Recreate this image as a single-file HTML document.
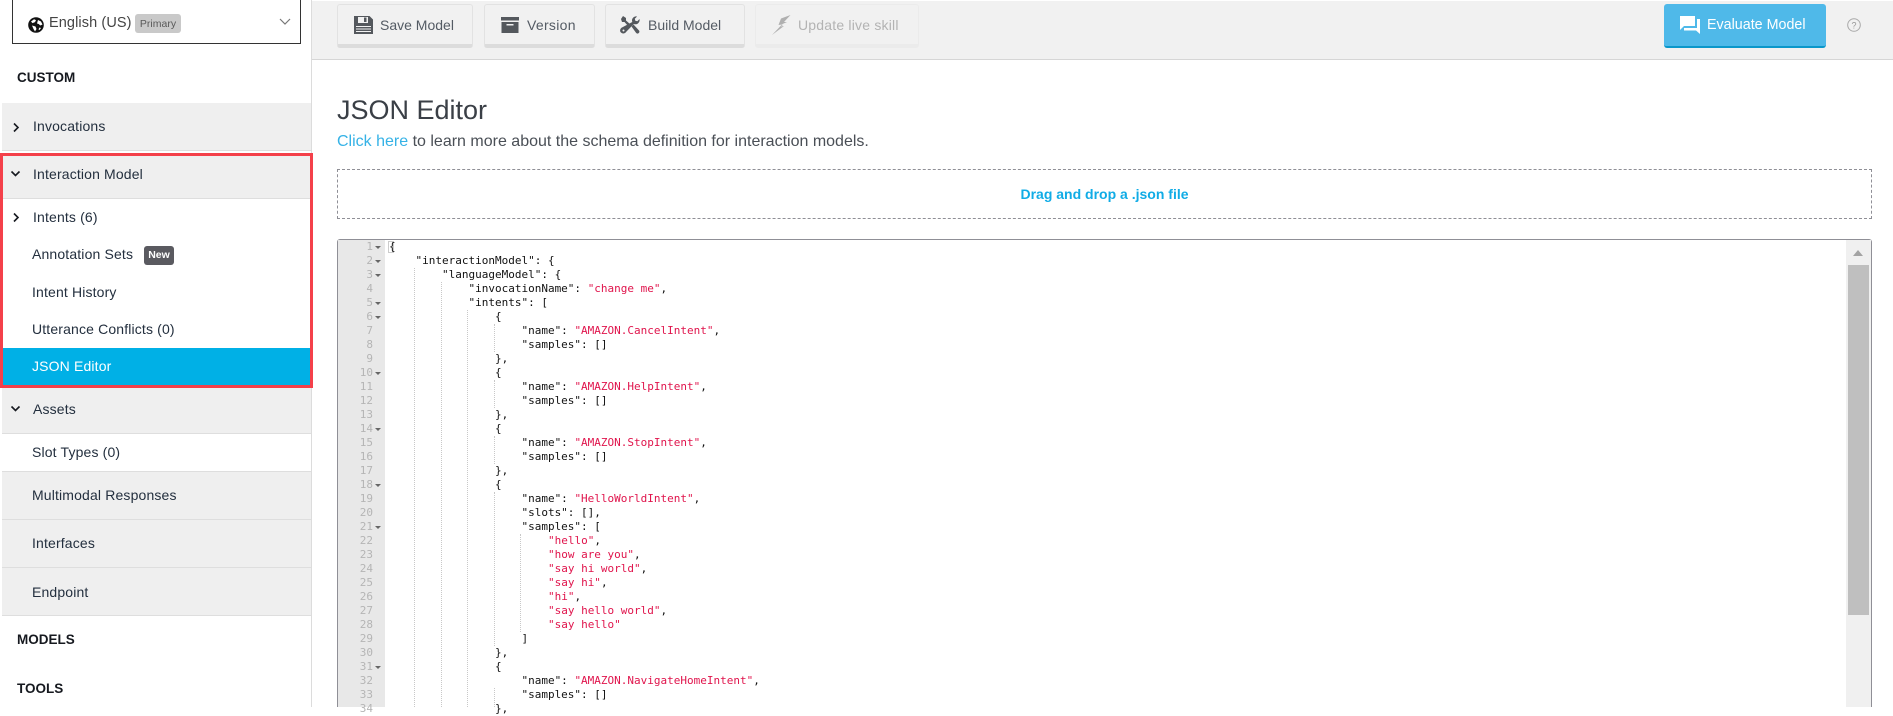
<!DOCTYPE html>
<html><head><meta charset="utf-8"><title>JSON Editor</title>
<style>
html,body{margin:0;padding:0;background:#fff;width:1893px;height:707px;overflow:hidden;font-family:"Liberation Sans",sans-serif;color:#232f3e}
.a{position:absolute}
.t{position:absolute;white-space:nowrap;font-size:14px;letter-spacing:.15px;line-height:18px;color:#232f3e}
.row{position:absolute;left:2px;width:309px;background:#efefef;border-bottom:1px solid #dedede;box-sizing:border-box}
.h{position:absolute;left:17px;font-weight:bold;font-size:13.5px;line-height:16px;white-space:nowrap;color:#16191f}
.btn{position:absolute;top:4px;height:44px;box-sizing:border-box;background:#f1f1f1;border:1px solid #e2e2e2;border-bottom:4px solid #dcdcdc;border-radius:3px}
.bt{position:absolute;top:16px;white-space:nowrap;font-size:14px;line-height:18px;color:#545b64}
#code{position:absolute;left:389px;top:240px;font:11px/14px "DejaVu Sans Mono",monospace;color:#111;white-space:pre;margin:0}
#nums{position:absolute;left:338px;top:240px;width:35px;text-align:right;font:11px/14px "DejaVu Sans Mono",monospace;color:#b5b5b5;white-space:pre;margin:0}
.s{color:#e0144c}
.g{position:absolute;width:0;border-left:1px dotted #c8c8c8}
.f{position:absolute;left:375px;width:0;height:0;border-left:3px solid transparent;border-right:3px solid transparent;border-top:3px solid #666}
</style></head><body>

<!-- sidebar -->
<div class="a" style="left:311px;top:0;width:1px;height:707px;background:#dcdcdc"></div>
<div class="a" style="left:12px;top:-2px;width:289px;height:46px;box-sizing:border-box;border:1px solid #333;background:#fff"></div>
<svg class="a" style="left:28px;top:17px" width="16" height="16" viewBox="0 0 16 16"><circle cx="8" cy="8" r="7.8" fill="#111"/><path d="M3 4.5l3-2.2 2 .8-1 2-2.5 1zM10 3l3 1.500 1.500 3-2.200 1-1.600-1.500-1.700-.5zM4 8.500l3.500 1 1 2.500-1.500 2.500-1.500-2.500zM11.500 10.500l1.500.5-1.500 2-1-.5z" fill="#fff"/></svg>
<div class="t" style="left:49px;top:14px;font-size:14.5px;color:#444;letter-spacing:.1px">English (US)</div>
<div class="a" style="left:135px;top:14px;width:46px;height:19px;background:#c9c9c9;border-radius:3px;font-size:10.5px;line-height:20px;text-align:center;color:#5a5a5a">Primary</div>
<svg class="a" style="left:279px;top:18px" width="12" height="8" viewBox="0 0 12 8"><path d="M1 1l5 5 5-5" fill="none" stroke="#777" stroke-width="1.2"/></svg>

<div class="h" style="top:70px">CUSTOM</div>

<div class="row" style="top:103px;height:48px"></div>
<svg class="a" style="left:12px;top:122px" width="8" height="11" viewBox="0 0 8 11"><path d="M2 1.500l4 4-4 4" fill="none" stroke="#16191f" stroke-width="1.600"/></svg>
<div class="t" style="left:33px;top:117px">Invocations</div>

<div class="row" style="top:155px;height:44px;left:3px;width:308px"></div>
<svg class="a" style="left:10px;top:170px" width="11" height="8" viewBox="0 0 11 8"><path d="M1.500 1.500l4 4 4-4" fill="none" stroke="#16191f" stroke-width="1.600"/></svg>
<div class="t" style="left:33px;top:165px">Interaction Model</div>

<svg class="a" style="left:12px;top:212px" width="8" height="11" viewBox="0 0 8 11"><path d="M2 1.500l4 4-4 4" fill="none" stroke="#16191f" stroke-width="1.600"/></svg>
<div class="t" style="left:33px;top:208px">Intents (6)</div>
<div class="t" style="left:32px;top:245px">Annotation Sets</div>
<div class="a" style="left:144px;top:246px;width:30px;height:19px;background:#5a5a60;border-radius:3px;color:#fff;font-size:10.5px;font-weight:bold;line-height:19px;text-align:center">New</div>
<div class="t" style="left:32px;top:283px">Intent History</div>
<div class="t" style="left:32px;top:320px">Utterance Conflicts (0)</div>
<div class="a" style="left:3px;top:348px;width:307px;height:37px;background:#00b0e6"></div>
<div class="t" style="left:32px;top:357px;color:#fff">JSON Editor</div>
<div class="a" style="left:0;top:153px;width:313px;height:235px;box-sizing:border-box;border:3px solid #f4404a"></div>

<div class="row" style="top:388px;height:46px"></div>
<svg class="a" style="left:10px;top:405px" width="11" height="8" viewBox="0 0 11 8"><path d="M1.500 1.500l4 4 4-4" fill="none" stroke="#16191f" stroke-width="1.600"/></svg>
<div class="t" style="left:33px;top:400px">Assets</div>
<div class="t" style="left:32px;top:443px">Slot Types (0)</div>

<div class="row" style="top:471px;height:49px;border-top:1px solid #dedede"></div>
<div class="t" style="left:32px;top:486px">Multimodal Responses</div>
<div class="row" style="top:520px;height:48px"></div>
<div class="t" style="left:32px;top:534px">Interfaces</div>
<div class="row" style="top:568px;height:48px"></div>
<div class="t" style="left:32px;top:583px">Endpoint</div>
<div class="h" style="top:632px">MODELS</div>
<div class="h" style="top:681px">TOOLS</div>

<!-- top bar -->
<div class="a" style="left:312px;top:1px;width:1581px;height:59px;box-sizing:border-box;background:#f1f1f1;border-bottom:1px solid #d6d6d6"></div>

<div class="btn" style="left:337px;width:136px"></div>
<svg class="a" style="left:354px;top:16px" width="19" height="18" viewBox="0 0 19 18"><path d="M0 0h15.500L19 3.500V18H0z" fill="#54585d"/><rect x="4" y="1" width="10" height="6" fill="#f1f1f1"/><rect x="10" y="1.500" width="2.500" height="4.500" fill="#54585d"/><path d="M2 10.500h15M2 13h15M2 15.500h15" stroke="#f1f1f1" stroke-width="1"/></svg>
<div class="bt" style="left:380px">Save Model</div>

<div class="btn" style="left:484px;width:111px"></div>
<svg class="a" style="left:501px;top:17px" width="18" height="16" viewBox="0 0 18 16"><rect width="18" height="3.500" fill="#54585d"/><rect x=".5" y="5" width="17" height="11" fill="#54585d"/><rect x="5.500" y="7" width="7" height="1.500" fill="#f1f1f1"/></svg>
<div class="bt" style="left:527px;letter-spacing:.3px">Version</div>

<div class="btn" style="left:605px;width:140px"></div>
<svg class="a" style="left:620px;top:16px" width="20" height="18" viewBox="0 0 20 18"><path d="M1 3l2-3 3 2v2.500l4.500 4-2 2-4-4.500H2z" fill="#54585d"/><path d="M11.500 10.500l2-2 5.500 6c.8 1 .3 2-.4 2.600-.8.7-1.800.6-2.500-.2z" fill="#54585d"/><path d="M12 4.500C12 2 14.500 0 17 .5l-2.200 2.300.5 2 2 .5L19.500 3c.6 2.800-1.500 5.300-4 5.300-.7 0-1.200-.1-1.700-.3L6.500 15.500C5 17.800 2.500 18 1 16.500s-1-3.500 .5-4.800L12.300 6c-.2-.5-.3-1-.3-1.500z" fill="#54585d"/><circle cx="3.500" cy="14.500" r="1" fill="#f1f1f1"/></svg>
<div class="bt" style="left:648px">Build Model</div>

<div class="btn" style="left:755px;width:164px;border-color:#ebebeb"></div>
<svg class="a" style="left:772px;top:15px" width="19" height="20" viewBox="0 0 19 20"><path d="M18.500 0L9 3.500 6.500 10l3.500-.5L0 20l12-9-3.500.5 2.500-1.500-1.500-.5 5.500-2.500H12z" fill="#b0b0b0"/></svg>
<div class="bt" style="left:798px;color:#b3b3b3;letter-spacing:.2px">Update live skill</div>

<div class="a" style="left:1664px;top:4px;width:162px;height:44px;box-sizing:border-box;background:#4fb9e9;border-bottom:2px solid #0a97ca;border-radius:3px"></div>
<svg class="a" style="left:1680px;top:15px" width="20" height="20" viewBox="0 0 20 20"><path d="M0 1h15v10H4l-4 4z" fill="#fff"/><path d="M17 4h3v15l-4-3.500H4V13h13z" fill="#fff"/></svg>
<div class="bt" style="left:1707px;color:#fff;font-size:14.3px">Evaluate Model</div>
<svg class="a" style="left:1847px;top:18px" width="14" height="14" viewBox="0 0 14 14"><circle cx="7" cy="7" r="6.300" fill="none" stroke="#a9a9a9"/><text x="7" y="10.300" font-size="9" text-anchor="middle" fill="#999" font-family="Liberation Sans">?</text></svg>

<!-- content -->
<div class="a" style="left:337px;top:92px;white-space:nowrap;font-size:27px;line-height:36px;color:#3a3f46">JSON Editor</div>
<div class="a" style="left:337px;top:133px;white-space:nowrap;font-size:16px;line-height:18px;color:#4a4f56"><span style="color:#35b2e6">Click here</span> to learn more about the schema definition for interaction models.</div>

<div class="a" style="left:337px;top:169px;width:1535px;height:50px;box-sizing:border-box;border:1px dashed #8f8f96"></div>
<div class="a" style="left:337px;top:185px;width:1535px;text-align:center;font-size:14px;line-height:18px;font-weight:bold;color:#10ace6">Drag and drop a .json file</div>

<!-- editor -->
<div class="a" style="left:337px;top:239px;width:1535px;height:468px;box-sizing:border-box;border:1px solid #8f8f96;border-bottom:0;border-radius:3px 3px 0 0;background:#fff"></div>
<div class="a" style="left:338px;top:240px;width:47px;height:467px;background:#e8e8e8"></div>
<div class="a" style="left:1846px;top:240px;width:25px;height:467px;background:#f0f0f0"></div>
<div class="a" style="left:1853px;top:250px;width:0;height:0;border-left:5.500px solid transparent;border-right:5.500px solid transparent;border-bottom:6px solid #a3a3a3"></div>
<div class="a" style="left:1848px;top:265px;width:21px;height:350px;background:#bfbfbf"></div>

<div class="g" style="left:414px;top:268px;height:439px"></div>
<div class="g" style="left:441px;top:282px;height:425px"></div>
<div class="g" style="left:467px;top:310px;height:397px"></div>
<div class="g" style="left:494px;top:324px;height:28px"></div>
<div class="g" style="left:494px;top:380px;height:28px"></div>
<div class="g" style="left:494px;top:436px;height:28px"></div>
<div class="g" style="left:494px;top:492px;height:154px"></div>
<div class="g" style="left:494px;top:688px;height:19px"></div>
<div class="g" style="left:520px;top:534px;height:98px"></div>
<div class="a" style="left:388px;top:241px;width:6px;height:12px;border:1px solid #ccc;box-sizing:border-box"></div>

<pre id="nums">1
2
3
4
5
6
7
8
9
10
11
12
13
14
15
16
17
18
19
20
21
22
23
24
25
26
27
28
29
30
31
32
33
34</pre>
<i class="f" style="top:246px"></i><i class="f" style="top:260px"></i><i class="f" style="top:274px"></i><i class="f" style="top:302px"></i><i class="f" style="top:316px"></i><i class="f" style="top:372px"></i><i class="f" style="top:428px"></i><i class="f" style="top:484px"></i><i class="f" style="top:526px"></i><i class="f" style="top:666px"></i>

<pre id="code">{
    "interactionModel": {
        "languageModel": {
            "invocationName": <span class="s">"change me"</span>,
            "intents": [
                {
                    "name": <span class="s">"AMAZON.CancelIntent"</span>,
                    "samples": []
                },
                {
                    "name": <span class="s">"AMAZON.HelpIntent"</span>,
                    "samples": []
                },
                {
                    "name": <span class="s">"AMAZON.StopIntent"</span>,
                    "samples": []
                },
                {
                    "name": <span class="s">"HelloWorldIntent"</span>,
                    "slots": [],
                    "samples": [
                        <span class="s">"hello"</span>,
                        <span class="s">"how are you"</span>,
                        <span class="s">"say hi world"</span>,
                        <span class="s">"say hi"</span>,
                        <span class="s">"hi"</span>,
                        <span class="s">"say hello world"</span>,
                        <span class="s">"say hello"</span>
                    ]
                },
                {
                    "name": <span class="s">"AMAZON.NavigateHomeIntent"</span>,
                    "samples": []
                },</pre>
</body></html>
